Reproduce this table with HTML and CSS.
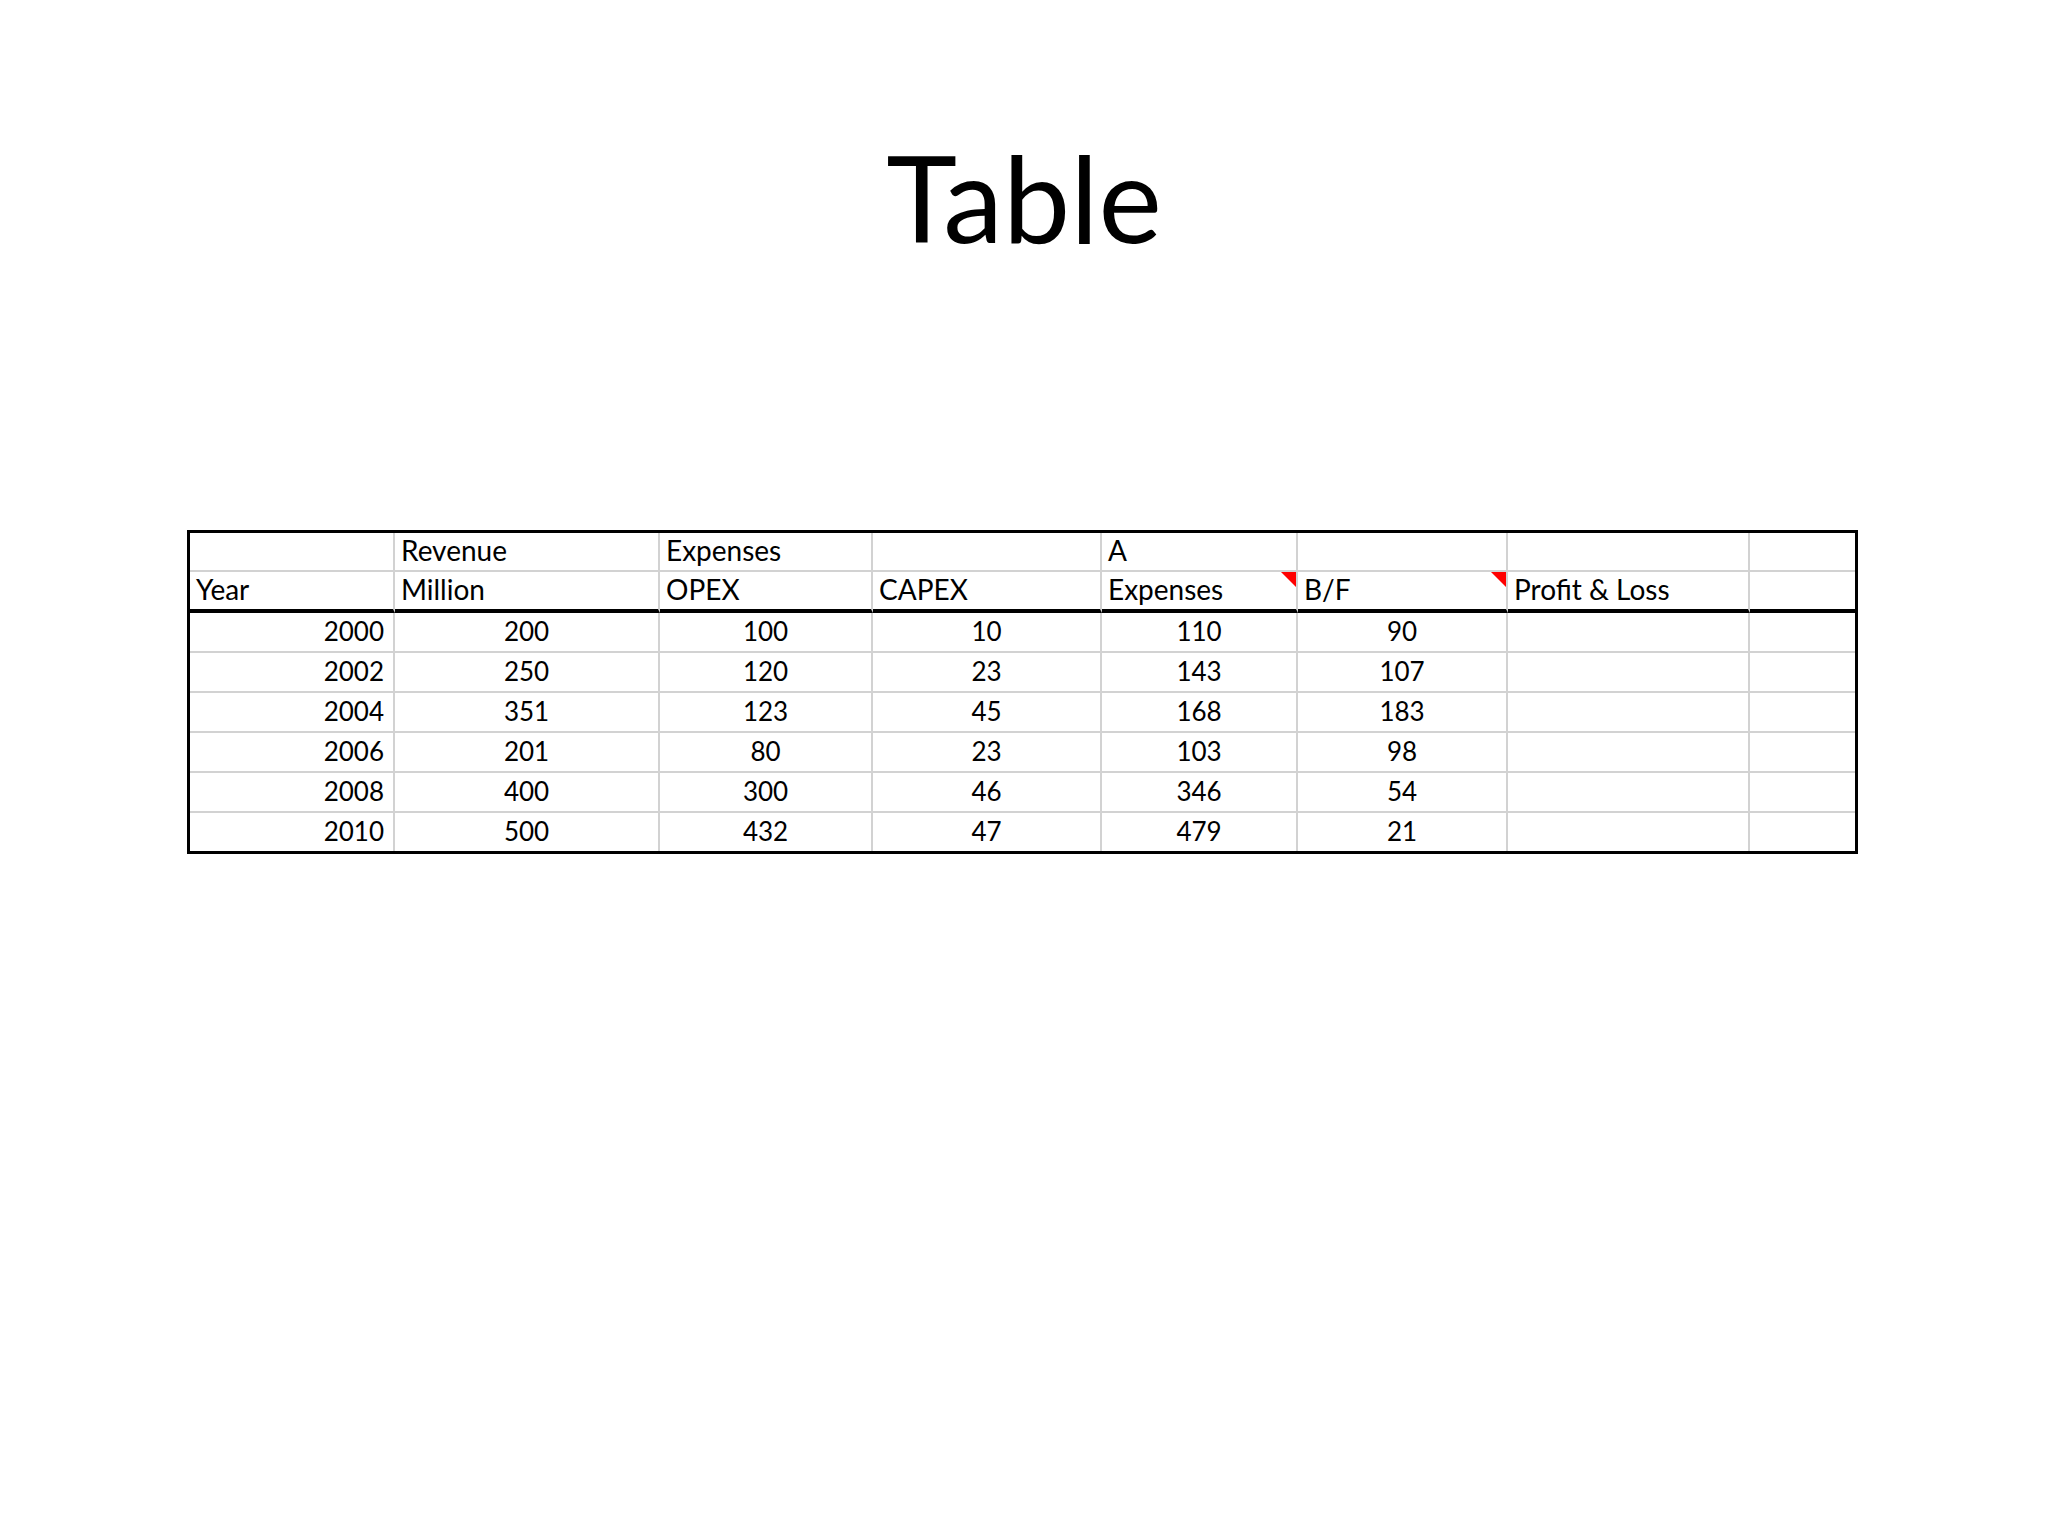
FILE: index.html
```html
<!DOCTYPE html>
<html lang="en">
<head>
<meta charset="utf-8">
<title>Table</title>
<link rel="stylesheet" href="styles.css">
</head>
<body>
<div class="slide">
  <h1 class="title">Table</h1>
  <table class="sheet">
    <colgroup>
      <col class="c1"><col class="c2"><col class="c3"><col class="c4"><col class="c5"><col class="c6"><col class="c7"><col class="c8">
    </colgroup>
    <thead>
      <tr class="h1">
        <th></th><th>Revenue</th><th>Expenses</th><th></th><th>A</th><th></th><th></th><th class="last"></th>
      </tr>
      <tr class="h2">
        <th>Year</th><th>Million</th><th>OPEX</th><th>CAPEX</th><th class="note">Expenses</th><th class="note">B/F</th><th>Profit &amp; Loss</th><th class="last"></th>
      </tr>
    </thead>
    <tbody>
      <tr><td class="yr">2000</td><td>200</td><td>100</td><td>10</td><td>110</td><td>90</td><td></td><td class="last"></td></tr>
      <tr><td class="yr">2002</td><td>250</td><td>120</td><td>23</td><td>143</td><td>107</td><td></td><td class="last"></td></tr>
      <tr><td class="yr">2004</td><td>351</td><td>123</td><td>45</td><td>168</td><td>183</td><td></td><td class="last"></td></tr>
      <tr><td class="yr">2006</td><td>201</td><td>80</td><td>23</td><td>103</td><td>98</td><td></td><td class="last"></td></tr>
      <tr><td class="yr">2008</td><td>400</td><td>300</td><td>46</td><td>346</td><td>54</td><td></td><td class="last"></td></tr>
      <tr class="end"><td class="yr">2010</td><td>500</td><td>432</td><td>47</td><td>479</td><td>21</td><td></td><td class="last"></td></tr>
    </tbody>
  </table>
</div>
</body>
</html>
```

FILE: styles.css
```css
* { box-sizing: border-box; }
html, body {
  margin: 0;
  padding: 0;
  background: #ffffff;
}
.slide {
  width: 2048px;
  height: 1536px;
  padding-top: 132px;
  font-family: Lato, "Liberation Sans", sans-serif;
  color: #000;
}
.title {
  margin: 0;
  font-weight: 400;
  font-size: 120px;
  line-height: 130px;
  text-align: center;
}
.sheet {
  margin: 268px 0 0 187px;
  width: 1671px;
  table-layout: fixed;
  border-collapse: separate;
  border-spacing: 0;
  border: 3px solid #000;
  font-size: 26px;
}
.c1 { width: 205px; }
.c2 { width: 265px; }
.c3 { width: 213px; }
.c4 { width: 229px; }
.c5 { width: 196px; }
.c6 { width: 210px; }
.c7 { width: 242px; }
.c8 { width: 105px; }

.sheet th, .sheet td {
  padding: 0 6px 4px 6px;
  border-right: 2px solid #d2d2d2;
  border-bottom: 2px solid #d2d2d2;
  font-weight: 400;
  vertical-align: bottom;
  white-space: nowrap;
  line-height: 31px;
}
.sheet th { text-align: left; font-size: 28px; padding-left: 6px; }
.sheet td { text-align: center; }
.sheet td.yr { text-align: right; padding-right: 9px; }
.sheet .last { border-right: none; }

.h1 th { height: 39px; }
.h2 th { height: 41px; border-bottom: 4px solid #000; }
.sheet tbody tr td { height: 40px; }
.sheet tbody tr.end td { height: 38px; border-bottom: none; }

.note { position: relative; }
.note::after {
  content: "";
  position: absolute;
  top: 0;
  right: 0;
  width: 15px;
  height: 15px;
  background: #ff0000;
  clip-path: polygon(0 0, 100% 0, 100% 100%);
}
```
